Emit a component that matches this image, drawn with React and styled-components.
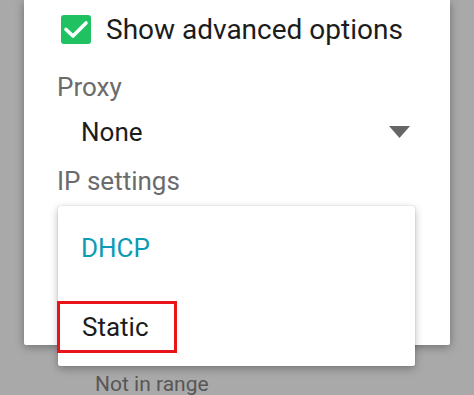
import React from 'react';
import styled, { createGlobalStyle } from 'styled-components';

const GlobalStyle = createGlobalStyle`
  html, body {
    margin: 0;
    padding: 0;
    background: #a9a9a9;
    font-family: Roboto, "Liberation Sans", sans-serif;
    overflow: hidden;
  }
`;

const Page = styled.div`
  width: 474px;
  height: 395px;
  overflow: hidden;
`;

const Dialog = styled.div`
  position: relative;
  margin-left: 24px;
  width: 426px;
  height: 345px;
  background: #fff;
  border-radius: 0 0 2px 2px;
  box-shadow: 0 2px 10px rgba(0, 0, 0, 0.35);
  padding-left: 33px;
  box-sizing: border-box;
`;

const CheckRow = styled.div`
  display: flex;
  align-items: flex-start;
  gap: 15px;
`;

const CheckBox = styled.div`
  margin-top: 15px;
  margin-left: 4px;
  width: 30px;
  height: 29px;
  border-radius: 3px;
  background: #1fc160;
  display: flex;
  align-items: center;
  justify-content: center;
`;

const CheckLabel = styled.div`
  margin-top: 14px;
  font-size: 28px;
  line-height: 32px;
  color: #1c1c1c;
`;

const FieldLabel = styled.div`
  margin-top: ${(p) => p.$gap}px;
  font-size: 26px;
  line-height: 30px;
  color: #6b6b6b;
`;

const SelectRow = styled.div`
  margin-top: 15px;
  padding-left: 24px;
  padding-right: 40px;
  display: flex;
  align-items: center;
  justify-content: space-between;
  font-size: 26px;
  line-height: 30px;
  color: #1c1c1c;
`;

const Menu = styled.div`
  position: absolute;
  left: 34px;
  top: 206px;
  width: 357px;
  height: 160px;
  background: #fff;
  border-radius: 2px;
  box-shadow: 0 0 1px rgba(0, 0, 0, 0.35), 0 3px 8px rgba(0, 0, 0, 0.28);
  display: flex;
  flex-direction: column;
`;

const MenuItem = styled.div`
  height: ${(p) => p.$h}px;
  display: flex;
  align-items: ${(p) => (p.$marked ? 'flex-start' : 'center')};
  padding-left: ${(p) => (p.$marked ? 0 : 23)}px;
  font-size: 26px;
  color: ${(p) => (p.$active ? '#0b9bb2' : '#1c1c1c')};
`;

const Marked = styled.span`
  margin-top: 11px;
  margin-left: -1px;
  width: 120px;
  height: 52px;
  box-sizing: border-box;
  border: 3px solid #e8141a;
  display: flex;
  align-items: center;
  padding-left: 22px;
  line-height: 30px;
`;

const Behind = styled.div`
  margin-top: 26px;
  padding-left: 95px;
  font-size: 21px;
  line-height: 26px;
  color: #575757;
`;

export default function App() {
  return (
    <Page>
      <GlobalStyle />
      <Dialog>
        <CheckRow>
          <CheckBox>
            <svg width="30" height="29" viewBox="0 0 30 29">
              <polyline
                points="5,14.5 12,21 25,8"
                fill="none"
                stroke="#fff"
                strokeWidth="3.6"
                strokeLinecap="round"
                strokeLinejoin="round"
              />
            </svg>
          </CheckBox>
          <CheckLabel>Show advanced options</CheckLabel>
        </CheckRow>
        <FieldLabel $gap={26}>Proxy</FieldLabel>
        <SelectRow>
          <span>None</span>
          <svg width="21" height="12" viewBox="0 0 21 12">
            <polygon points="0,0 21,0 10.5,12" fill="#666" />
          </svg>
        </SelectRow>
        <FieldLabel $gap={19}>IP settings</FieldLabel>
        <Menu>
          <MenuItem $h={84} $active>DHCP</MenuItem>
          <MenuItem $h={76} $marked>
            <Marked>Static</Marked>
          </MenuItem>
        </Menu>
      </Dialog>
      <Behind>Not in range</Behind>
    </Page>
  );
}
